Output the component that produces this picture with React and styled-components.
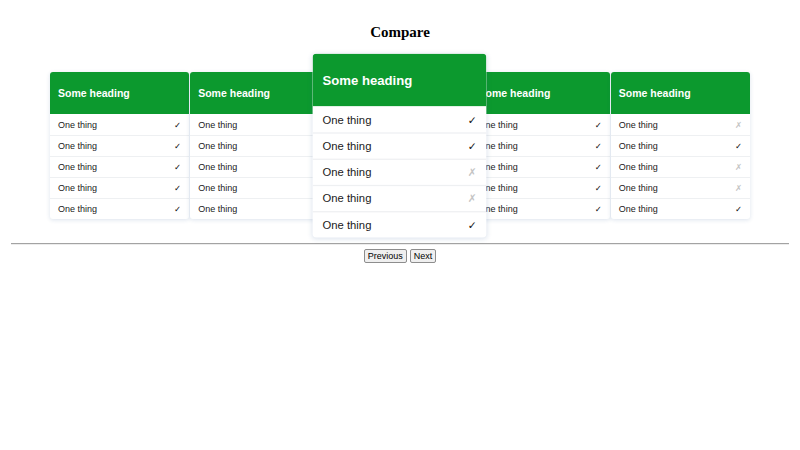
import React from 'react'
import styled, { createGlobalStyle } from 'styled-components'

const GlobalStyle = createGlobalStyle`
  body {
    margin: 8px;
    font-family: "Liberation Serif", "Times New Roman", serif;
    background: #ffffff;
  }
`

const plans = [
  [true, true, true, true, true],
  [true, true, true, true, true],
  [true, true, false, false, true],
  [true, true, true, true, true],
  [false, true, false, false, true],
]

const App = () => (
  <>
    <GlobalStyle />
    <Title>Compare</Title>
    <Cards>
      {plans.map((marks, i) => (
        <Card key={i} $featured={i === 2}>
          <Heading>Some heading</Heading>
          {marks.map((on, j) => (
            <Row key={j}>
              <span>One thing</span>
              <Mark $on={on}>{on ? '✓' : '✗'}</Mark>
            </Row>
          ))}
        </Card>
      ))}
    </Cards>
    <Rule />
    <Pager>
      <PagerButton>Previous</PagerButton>
      <PagerButton>Next</PagerButton>
    </Pager>
  </>
)

const Title = styled.h2`
  margin: 16px 0 31px;
  font-size: 15px;
  font-weight: bold;
  text-align: center;
  color: #000;
`
const Cards = styled.div`
  width: 700px;
  margin: 0 auto;
  display: flex;
  gap: 1px;
`
const Card = styled.div`
  flex: 1;
  position: relative;
  background: #ffffff;
  border-radius: 3px;
  overflow: hidden;
  box-shadow: 0 1px 4px rgba(40, 80, 140, 0.16);
  transform: ${props => props.$featured ? 'scale(1.25)' : 'none'};
  z-index: ${props => props.$featured ? 2 : 1};
`
const Heading = styled.div`
  height: 42px;
  display: flex;
  align-items: center;
  padding: 0 8px;
  background: #0c992e;
  color: #ffffff;
  font-family: "Liberation Sans", Arial, sans-serif;
  font-weight: bold;
  font-size: 10.5px;
`
const Row = styled.div`
  box-sizing: border-box;
  height: 21px;
  display: flex;
  align-items: center;
  justify-content: space-between;
  padding: 0 8px;
  font-family: "Liberation Sans", Arial, sans-serif;
  font-size: 9px;
  color: #1a1a1a;
  & + & {
    border-top: 1px solid #eef0f2;
  }
`
const Mark = styled.span`
  font-family: "DejaVu Sans", sans-serif;
  font-size: 8.5px;
  color: ${props => props.$on ? '#111111' : '#c4c4c4'};
`
const Rule = styled.hr`
  margin: 24px 3px 4px;
  border: none;
  border-top: 1px solid #a3a3a3;
  border-bottom: 1px solid #ececec;
`
const Pager = styled.div`
  display: flex;
  justify-content: center;
  gap: 3px;
`
const PagerButton = styled.button`
  height: 14px;
  padding: 0 3px;
  font-family: "Liberation Sans", Arial, sans-serif;
  font-size: 9px;
  line-height: 12px;
  color: #000;
  background: #efefef;
  border: 1px solid #8d8d8d;
  border-radius: 2px;
`

export default App
